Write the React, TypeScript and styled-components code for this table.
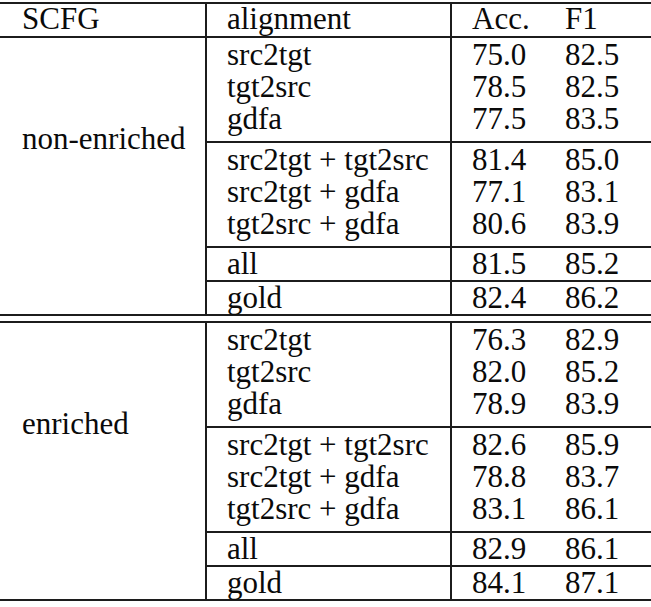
import React from 'react';
import styled, { createGlobalStyle, css } from 'styled-components';

const Global = createGlobalStyle`
  html, body {
    margin: 0;
    padding: 0;
    background: #fff;
    font-family: "Liberation Serif", "Times New Roman", serif;
  }
`;

const LINE = '2px solid #1c1c1c';

const cellText = css`
  font-family: "Liberation Serif", "Times New Roman", serif;
  font-size: 31px;
  line-height: 24px;
  color: #0a0a0a;
  white-space: nowrap;
`;

const Page = styled.div`
  width: 651px;
  padding-top: 2px;
`;

const Table = styled.table`
  width: 651px;
  table-layout: fixed;
  border-collapse: separate;
  border-spacing: 0;
`;

const Col = styled.col<{ $w: number }>`
  width: ${(p) => p.$w}px;
`;

const HeadCell = styled.th<{ $rule?: boolean; $pad: number }>`
  ${cellText}
  text-align: left;
  font-weight: normal;
  padding: 3px 0 5px ${(p) => p.$pad}px;
  border-top: ${LINE};
  border-bottom: ${LINE};
  ${(p) => p.$rule && css`border-right: ${LINE};`}
`;

const NameCell = styled.td`
  ${cellText}
  vertical-align: top;
  padding: 89px 0 0 22px;
  border-right: ${LINE};
  border-bottom: ${LINE};
`;

type Pos = 'single' | 'first' | 'mid' | 'last';

const DataCell = styled.td<{ $pos: Pos; $rule?: boolean; $pad: number }>`
  ${cellText}
  vertical-align: top;
  padding-left: ${(p) => p.$pad}px;
  ${(p) => p.$rule && css`border-right: ${LINE};`}
  ${(p) =>
    p.$pos === 'single'
      ? css`
          padding-top: 4px;
          padding-bottom: 4px;
          border-bottom: ${LINE};
        `
      : p.$pos === 'last'
      ? css`
          padding-top: 5px;
          padding-bottom: 10px;
          border-bottom: ${LINE};
        `
      : css`
          padding-top: 5px;
          padding-bottom: 3px;
        `}
`;

const Divider = styled.td`
  height: 5px;
  padding: 0;
  border-bottom: ${LINE};
`;

type Row = [string, string, string];

const sections: { name: string; groups: Row[][] }[] = [
  {
    name: 'non-enriched',
    groups: [
      [
        ['src2tgt', '75.0', '82.5'],
        ['tgt2src', '78.5', '82.5'],
        ['gdfa', '77.5', '83.5'],
      ],
      [
        ['src2tgt + tgt2src', '81.4', '85.0'],
        ['src2tgt + gdfa', '77.1', '83.1'],
        ['tgt2src + gdfa', '80.6', '83.9'],
      ],
      [['all', '81.5', '85.2']],
      [['gold', '82.4', '86.2']],
    ],
  },
  {
    name: 'enriched',
    groups: [
      [
        ['src2tgt', '76.3', '82.9'],
        ['tgt2src', '82.0', '85.2'],
        ['gdfa', '78.9', '83.9'],
      ],
      [
        ['src2tgt + tgt2src', '82.6', '85.9'],
        ['src2tgt + gdfa', '78.8', '83.7'],
        ['tgt2src + gdfa', '83.1', '86.1'],
      ],
      [['all', '82.9', '86.1']],
      [['gold', '84.1', '87.1']],
    ],
  },
];

const posOf = (i: number, n: number): Pos =>
  n === 1 ? 'single' : i === n - 1 ? 'last' : i === 0 ? 'first' : 'mid';

export default function App() {
  return (
    <Page>
      <Global />
      <Table>
        <colgroup>
          <Col $w={207} />
          <Col $w={245} />
          <Col $w={94} />
          <Col $w={105} />
        </colgroup>
        <thead>
          <tr>
            <HeadCell $rule $pad={22}>SCFG</HeadCell>
            <HeadCell $rule $pad={20}>alignment</HeadCell>
            <HeadCell $pad={20}>Acc.</HeadCell>
            <HeadCell $pad={19}>F1</HeadCell>
          </tr>
        </thead>
        {sections.map((s, si) => {
          const total = s.groups.reduce((n, g) => n + g.length, 0);
          return (
            <tbody key={s.name}>
              {si > 0 && (
                <tr>
                  <Divider colSpan={4} />
                </tr>
              )}
              {s.groups.flatMap((g, gi) =>
                g.map((r, ri) => {
                  const pos = posOf(ri, g.length);
                  return (
                    <tr key={`${gi}-${ri}`}>
                      {gi === 0 && ri === 0 && <NameCell rowSpan={total}>{s.name}</NameCell>}
                      <DataCell $pos={pos} $rule $pad={20}>{r[0]}</DataCell>
                      <DataCell $pos={pos} $pad={20}>{r[1]}</DataCell>
                      <DataCell $pos={pos} $pad={19}>{r[2]}</DataCell>
                    </tr>
                  );
                })
              )}
            </tbody>
          );
        })}
      </Table>
    </Page>
  );
}
